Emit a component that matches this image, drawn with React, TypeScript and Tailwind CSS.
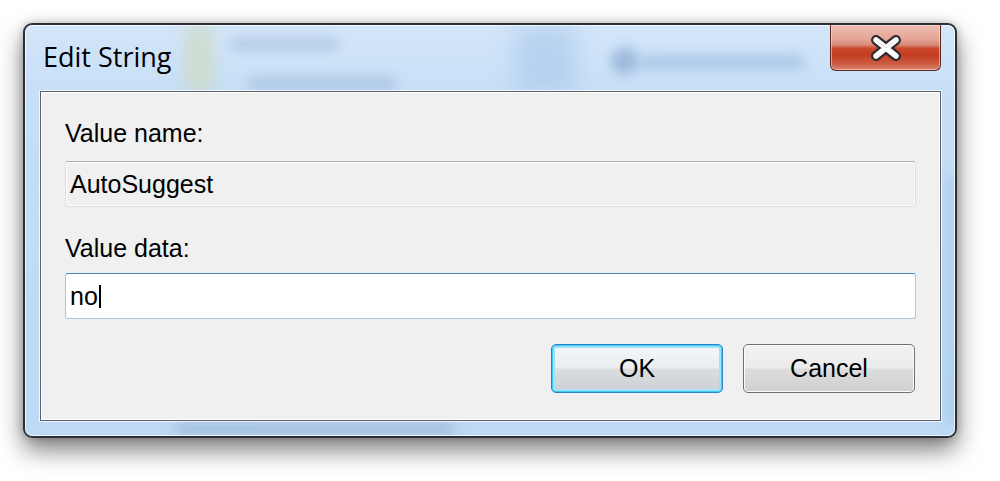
import React from "react";

function CloseGlyph() {
  return (
    <svg width="34" height="26" viewBox="0 0 34 26">
      <path d="M7 5 L27 21 M27 5 L7 21" stroke="#2f2a2e" strokeWidth="10" strokeLinecap="round" fill="none" />
      <path d="M7 5 L27 21 M27 5 L7 21" stroke="#ffffff" strokeWidth="5.5" strokeLinecap="round" fill="none" />
      <path d="M8 6 L17 13 L26 6" stroke="#dcdce6" strokeWidth="1" fill="none" />
    </svg>
  );
}

function Button({ label, focused }: { label: string; focused?: boolean }) {
  return (
    <div
      className={
        focused
          ? "relative flex h-[49px] w-[172px] items-center justify-center rounded-[5px] border border-[#2a86c8] bg-[linear-gradient(to_bottom,#f3f7f9_0%,#eaeef0_48%,#d9dde0_52%,#ccd0d3_100%)] shadow-[inset_0_0_0_1px_#3fc8f6,inset_0_0_0_3px_#9fe2f9]"
          : "relative flex h-[49px] w-[172px] items-center justify-center rounded-[5px] border border-[#707070] bg-[linear-gradient(to_bottom,#f2f2f2_0%,#ebebeb_48%,#dddddd_52%,#cfcfcf_100%)] shadow-[inset_0_0_0_1px_#fbfbfb]"
      }
    >
      <span className="text-[25px] leading-none text-black" style={{ fontFamily: '"Liberation Sans", Arial, sans-serif' }}>
        {label}
      </span>
    </div>
  );
}

export default function App() {
  const body = { fontFamily: '"Liberation Sans", Arial, sans-serif' };
  return (
    <div className="h-[481px] w-[1000px] overflow-hidden bg-white pl-[23px] pt-[23px]">
      <div className="relative h-[415px] w-[934px] rounded-[9px] border-2 border-[#2b3036] bg-[linear-gradient(to_bottom,#d3e6f9_0%,#c6def6_18%,#bdd9f5_100%)] shadow-[0_12px_24px_rgba(0,0,0,0.5),0_0_8px_rgba(0,0,0,0.22)]">
        {/* glass background smudges */}
        <div className="pointer-events-none absolute inset-0 overflow-hidden rounded-[7px]">
          <div className="absolute left-[160px] top-0 h-[68px] w-[28px] bg-[#cfd8b4] opacity-60 blur-[8px]" />
          <div className="absolute left-[205px] top-[13px] h-[12px] w-[110px] rounded-full bg-[#8eabcf] opacity-45 blur-[6px]" />
          <div className="absolute left-[222px] top-[52px] h-[14px] w-[150px] rounded-full bg-[#8eabcf] opacity-45 blur-[6px]" />
          <div className="absolute left-[490px] top-0 h-[68px] w-[60px] bg-[#a6c6ea] opacity-60 blur-[12px]" />
          <div className="absolute left-[586px] top-[23px] h-[26px] w-[28px] rounded-full bg-[#7c9fcc] opacity-60 blur-[6px]" />
          <div className="absolute left-[615px] top-[30px] h-[14px] w-[165px] rounded-full bg-[#8fb0d9] opacity-55 blur-[6px]" />
          <div className="absolute left-[150px] top-[398px] h-[12px] w-[280px] rounded-full bg-[#8aa6c6] opacity-55 blur-[6px]" />
          <div className="absolute left-[920px] top-[150px] h-[250px] w-[12px] bg-[#a7cbef] opacity-60 blur-[4px]" />
          <div className="absolute inset-0 rounded-[7px] border border-white/70" />
        </div>

        <div className="relative flex h-full flex-col px-[15px] pb-[15px] pr-[14px]">
          {/* title bar */}
          <div className="flex h-[66px] items-start justify-between">
            <div
              className="pl-[3px] pt-[19px] text-[27px] leading-[25px] text-black"
              style={{ fontFamily: '"Open Sans", "Noto Sans", sans-serif' }}
            >
              Edit String
            </div>
            <div className="flex h-[46px] w-[111px] items-center justify-center rounded-b-[6px] border border-t-0 border-[#5a2a22] bg-[linear-gradient(to_bottom,#eebcb2_0%,#e5a698_30%,#da8b79_44%,#c9482e_52%,#c33c22_66%,#cd5b43_86%,#dc866f_100%)] shadow-[inset_0_0_0_1px_rgba(255,220,210,0.55)]">
              <CloseGlyph />
            </div>
          </div>

          {/* client area */}
          <div
            className="flex flex-1 flex-col border border-[#58616b] bg-[#f0f0f0] px-[24px] pt-[29px] shadow-[0_0_0_1px_rgba(255,255,255,0.75),inset_0_0_0_1px_#ffffff]"
            style={body}
          >
            <div className="text-[25px] leading-[25px] text-black">Value name:</div>
            <div className="mt-[15px] flex h-[46px] items-center rounded-[3px] border border-[#dadfe5] border-t-[#abadb3] bg-[#f0f0f0] pl-[4px] shadow-[inset_0_0_0_1px_#fdfdfd]">
              <span className="text-[25px] leading-[25px] text-black">AutoSuggest</span>
            </div>
            <div className="mt-[29px] text-[25px] leading-[25px] text-black">Value data:</div>
            <div className="mt-[12px] flex h-[46px] items-center rounded-[3px] border border-[#a6cae6] border-t-[#4a86b8] bg-white pl-[4px]">
              <span className="text-[25px] leading-[25px] text-black">no</span>
              <span className="ml-[1px] h-[23px] w-[2px] bg-black" />
            </div>
            <div className="mt-[25px] flex justify-end gap-[20px] pr-[1px]">
              <Button label="OK" focused />
              <Button label="Cancel" />
            </div>
          </div>
        </div>
      </div>
    </div>
  );
}
